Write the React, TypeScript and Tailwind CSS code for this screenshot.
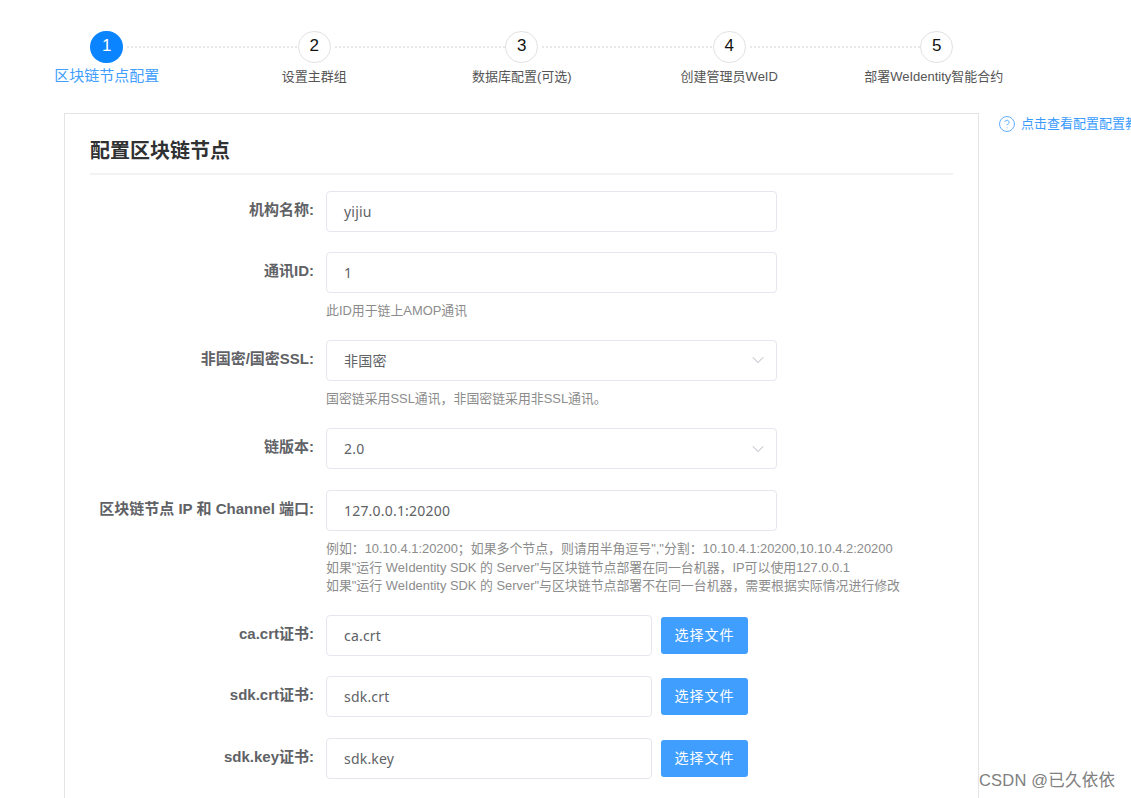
import { ChevronDown, CircleHelp } from "lucide-react"

const sans = "font-['Liberation_Sans','Noto_Sans_CJK_SC',sans-serif]"
const steps = ["区块链节点配置", "设置主群组", "数据库配置(可选)", "创建管理员WeID", "部署WeIdentity智能合约"]

function Steps() {
  return (
    <div className="flex pt-[31px] pl-[3px]">
      {steps.map((label, i) => (
        <div key={label} className="w-[207.5px] shrink-0 flex flex-col items-center relative">
          {i < steps.length - 1 && (
            <div className="absolute top-[15px] left-[124px] w-[170px] border-t-2 border-dotted border-[#e8e8e8]" />
          )}
          <div
            className={
              i === 0
                ? "w-[33px] h-[32px] rounded-full bg-[#0a84ff] text-white flex items-center justify-center text-[17px] leading-none pb-[3px]"
                : "w-[33px] h-[32px] rounded-full bg-white border border-[#e2e2e2] text-[#111] flex items-center justify-center text-[17px] leading-none pb-[3px]"
            }
          >
            {i + 1}
          </div>
          <div
            className={
              i === 0
                ? "mt-[3px] text-[15px] leading-[20px] text-[#409eff] whitespace-nowrap"
                : i === 4
                  ? "mt-[4px] mr-[6px] text-[13px] leading-[20px] text-[#555] whitespace-nowrap"
                  : "mt-[4px] text-[13px] leading-[20px] text-[#555] whitespace-nowrap"
            }
          >
            {label}
          </div>
        </div>
      ))}
    </div>
  )
}

function Row({ label, mt, children }: { label: string; mt: string; children: React.ReactNode }) {
  return (
    <div className={`flex ${mt}`}>
      <label className="w-[236px] pr-[12px] shrink-0 text-right text-[15px] leading-[37px] font-bold text-[#606266] whitespace-nowrap">{label}</label>
      <div className="flex-1 min-w-0">{children}</div>
    </div>
  )
}

function Field({ value, select, short }: { value: string; select?: boolean; short?: boolean }) {
  return (
    <div
      className={`${short ? "w-[326px]" : "w-[451px]"} h-[41px] border border-[#e6e7ee] rounded-[4px] bg-white pl-[17px] pr-[8px] flex items-center justify-between text-[14px] text-[#606266] font-['Noto_Sans','Noto_Sans_CJK_SC',sans-serif] tracking-[0.2px]`}
    >
      <span>{value}</span>
      {select && <ChevronDown className="w-[20px] h-[20px] text-[#c0c4cc]" strokeWidth={1.25} />}
    </div>
  )
}

function Help({ children }: { children: React.ReactNode }) {
  return <div className="mt-[9px] text-[12.9px] leading-[18.5px] text-[#8c8c8c] whitespace-nowrap">{children}</div>
}

function FileRow({ label, value, mt }: { label: string; value: string; mt: string }) {
  return (
    <Row label={label} mt={mt}>
      <div className="flex items-center">
        <Field value={value} short />
        <button className="ml-[9px] w-[87px] h-[37px] rounded-[3px] bg-[#409eff] text-white text-[14px] tracking-[1px]">选择文件</button>
      </div>
    </Row>
  )
}

export default function App() {
  return (
    <div className={`relative w-[1131px] h-[798px] overflow-hidden bg-white ${sans}`}>
      <Steps />
      <div className="flex items-start mt-[26px]">
        <div className="ml-[64px] w-[915px] h-[720px] shrink-0 border border-[#e4e4e6] border-b-0 px-[25px]">
          <h2 className="pt-[23px] pb-[8px] text-[20px] leading-[28px] font-bold text-[#303133] border-b-2 border-[#f2f2f4]">配置区块链节点</h2>
          <div className="mt-[16px]">
            <Row label="机构名称:" mt="mt-0"><Field value="yijiu" /></Row>
            <Row label="通讯ID:" mt="mt-[20px]">
              <Field value="1" />
              <Help>此ID用于链上AMOP通讯</Help>
            </Row>
            <Row label="非国密/国密SSL:" mt="mt-[19px]">
              <Field value="非国密" select />
              <Help>国密链采用SSL通讯，非国密链采用非SSL通讯。</Help>
            </Row>
            <Row label="链版本:" mt="mt-[20px]"><Field value="2.0" select /></Row>
            <Row label="区块链节点 IP 和 Channel 端口:" mt="mt-[21px]">
              <Field value="127.0.0.1:20200" />
              <Help>
                例如：10.10.4.1:20200；如果多个节点，则请用半角逗号","分割：10.10.4.1:20200,10.10.4.2:20200
                <br />
                如果"运行 WeIdentity SDK 的 Server"与区块链节点部署在同一台机器，IP可以使用127.0.0.1
                <br />
                如果"运行 WeIdentity SDK 的 Server"与区块链节点部署不在同一台机器，需要根据实际情况进行修改
              </Help>
            </Row>
            <FileRow label="ca.crt证书:" value="ca.crt" mt="mt-[19px]" />
            <FileRow label="sdk.crt证书:" value="sdk.crt" mt="mt-[20px]" />
            <FileRow label="sdk.key证书:" value="sdk.key" mt="mt-[21px]" />
          </div>
        </div>
        <div className="ml-[19px] mt-[2px] flex items-center gap-[5px] text-[13px] leading-[18px] text-[#3a9bff] whitespace-nowrap">
          <CircleHelp className="w-[18px] h-[18px] text-[#5aa9ff]" strokeWidth={1.25} />
          <span>点击查看配置配置教程</span>
        </div>
      </div>
      <div className="absolute left-[979px] top-[769px] text-[16.5px] leading-[22px] text-[#808080] tracking-[0.2px] whitespace-nowrap">CSDN @已久依依</div>
    </div>
  )
}
